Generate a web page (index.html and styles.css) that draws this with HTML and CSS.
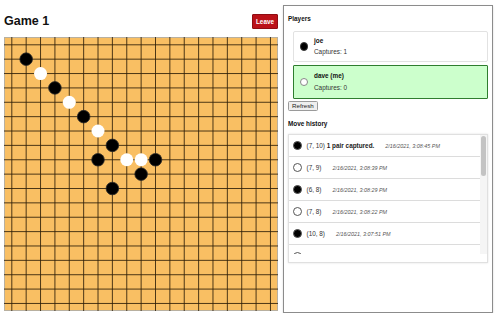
FILE: index.html
```html
<!DOCTYPE html>
<html>
<head>
<meta charset="utf-8">
<title>Game 1</title>
<link rel="stylesheet" href="styles.css">
</head>
<body>
<div class="app">
  <main class="game">
    <header class="game-header">
      <h1 class="title">Game 1</h1>
      <button class="leave">Leave</button>
    </header>
    <div class="board">
      <svg class="board-svg" width="274" height="274" viewBox="0 0 274 274">
        <rect x="0.5" y="0.5" width="273" height="273" fill="#f9bf63" stroke="#b8b0a0" stroke-width="1"/>
        <path class="grid" d="M7.8 0V274M22.17 0V274M36.54 0V274M50.91 0V274M65.28 0V274M79.65 0V274M94.02 0V274M108.39 0V274M122.76 0V274M137.13 0V274M151.5 0V274M165.87 0V274M180.24 0V274M194.61 0V274M208.98 0V274M223.35 0V274M237.72 0V274M252.09 0V274M266.46 0V274M0 7.8H274M0 22.17H274M0 36.54H274M0 50.91H274M0 65.28H274M0 79.65H274M0 94.02H274M0 108.39H274M0 122.76H274M0 137.13H274M0 151.5H274M0 165.87H274M0 180.24H274M0 194.61H274M0 208.98H274M0 223.35H274M0 237.72H274M0 252.09H274M0 266.46H274"/>
        <g class="black-stones">
          <circle cx="22.17" cy="22.17" r="6.3"/>
          <circle cx="50.91" cy="50.91" r="6.3"/>
          <circle cx="79.65" cy="79.65" r="6.3"/>
          <circle cx="108.39" cy="108.39" r="6.3"/>
          <circle cx="94.02" cy="122.76" r="6.3"/>
          <circle cx="151.5" cy="122.76" r="6.3"/>
          <circle cx="137.13" cy="137.13" r="6.3"/>
          <circle cx="108.39" cy="151.5" r="6.3"/>
        </g>
        <g class="white-stones">
          <circle cx="36.54" cy="36.54" r="6.5"/>
          <circle cx="65.28" cy="65.28" r="6.5"/>
          <circle cx="94.02" cy="94.02" r="6.5"/>
          <circle cx="122.76" cy="122.76" r="6.5"/>
          <circle cx="137.13" cy="122.76" r="6.5"/>
        </g>
      </svg>
    </div>
  </main>
  <aside class="panel">
    <h2 class="section-title">Players</h2>
    <ul class="players">
      <li class="player">
        <span class="pstone black"></span>
        <div class="pinfo">
          <div class="pname">joe</div>
          <div class="pcaps">Captures: 1</div>
        </div>
      </li>
      <li class="player me">
        <span class="pstone white"></span>
        <div class="pinfo">
          <div class="pname">dave (me)</div>
          <div class="pcaps">Captures: 0</div>
        </div>
      </li>
    </ul>
    <button class="refresh">Refresh</button>
    <h2 class="section-title history-title">Move history</h2>
    <div class="history-box">
      <ul class="history">
        <li class="move"><span class="hstone black"></span><span class="coord">(7, 10) <b>1 pair captured.</b></span><span class="date">2/16/2021, 3:08:45 PM</span></li>
        <li class="move"><span class="hstone white"></span><span class="coord">(7, 9)</span><span class="date">2/16/2021, 3:08:39 PM</span></li>
        <li class="move"><span class="hstone black"></span><span class="coord">(6, 8)</span><span class="date">2/16/2021, 3:08:29 PM</span></li>
        <li class="move"><span class="hstone white"></span><span class="coord">(7, 8)</span><span class="date">2/16/2021, 3:08:22 PM</span></li>
        <li class="move"><span class="hstone black"></span><span class="coord">(10, 8)</span><span class="date">2/16/2021, 3:07:51 PM</span></li>
        <li class="move partial"><span class="hstone white"></span></li>
      </ul>
      <div class="scrollbar"><div class="thumb"></div></div>
    </div>
  </aside>
</div>
</body>
</html>
```

FILE: styles.css
```css
* { box-sizing: border-box; }

html, body {
  margin: 0;
  padding: 0;
  background: #ffffff;
}

body {
  font-family: "Liberation Sans", Arial, sans-serif;
  font-size: 6.4px;
  color: #222;
}

.app {
  display: flex;
  align-items: flex-start;
  gap: 5px;
  padding: 5px 0 0 4px;
}

.game {
  width: 274px;
}

.game-header {
  display: flex;
  justify-content: space-between;
  align-items: center;
  height: 15px;
  margin-top: 9px;
  margin-bottom: 8px;
}

.title {
  margin: 0;
  font-size: 12.5px;
  font-weight: bold;
  color: #111;
  line-height: 15px;
}

.leave {
  width: 26px;
  height: 15px;
  padding: 0;
  margin: 0;
  border: 1px solid #8f0d12;
  border-radius: 1px;
  background: #bb1219;
  color: #ffffff;
  font-family: "Liberation Sans", Arial, sans-serif;
  font-weight: bold;
  font-size: 6.4px;
}

.board {
  width: 274px;
  height: 274px;
}

.board-svg {
  display: block;
}

.grid {
  stroke: #2e1f08;
  stroke-opacity: 0.85;
  stroke-width: 1;
  fill: none;
}

.black-stones circle {
  fill: #000000;
  stroke: #2a2a2a;
  stroke-width: 0.8;
}

.white-stones circle {
  fill: #ffffff;
}

.panel {
  width: 210px;
  height: 308px;
  border: 1px solid #8c8c8c;
  box-shadow: 0 1px 2px rgba(0, 0, 0, 0.15);
  padding: 0 4px 0 4px;
}

.section-title {
  margin: 8.5px 0 0 0;
  font-size: 6.4px;
  font-weight: bold;
  line-height: 7.5px;
  color: #111;
}

.players {
  list-style: none;
  margin: 8.5px 0 0 4.5px;
  padding: 0;
}

.player {
  display: flex;
  align-items: center;
  gap: 6px;
  height: 31.5px;
  padding: 0 6px;
  border: 1px solid #e2e2e2;
  border-radius: 2px;
  background: #ffffff;
}

.player.me {
  height: 33.5px;
  margin-top: 3px;
  background: #ccffcc;
  border: 1px solid #2f7d2f;
  border-radius: 1px;
}

.pinfo {
  display: flex;
  flex-direction: column;
  gap: 3.5px;
}

.pname {
  font-weight: bold;
  line-height: 8px;
  color: #111;
}

.pcaps {
  line-height: 8px;
  color: #333;
}

.pstone {
  width: 8.5px;
  height: 8.5px;
  border-radius: 50%;
  flex: none;
}

.pstone.black {
  background: #000000;
  border: 1px solid #3a3a3a;
}

.pstone.white {
  background: #ffffff;
  border: 1px solid #888;
}

.refresh {
  display: block;
  margin: 2.5px 0 0 0;
  height: 9.5px;
  padding: 0 3px;
  border: 1px solid #9a9a9a;
  border-radius: 1.5px;
  background: #efefef;
  color: #222;
  font-family: "Liberation Sans", Arial, sans-serif;
  font-size: 6.2px;
  line-height: 7px;
}

.history-title {
  margin-top: 9px;
}

.history-box {
  display: flex;
  align-items: flex-start;
  margin-top: 7px;
  width: 200px;
  height: 129px;
  border: 1px solid #e0e0e0;
  box-shadow: 0 0 2px rgba(0, 0, 0, 0.12);
}

.history {
  flex: 1;
  list-style: none;
  margin: 0;
  padding: 0;
  height: 119px;
  overflow: hidden;
}

.scrollbar {
  width: 7px;
  height: 119px;
  background: #f5f5f5;
  padding: 1px;
}

.thumb {
  width: 5px;
  height: 40px;
  border-radius: 3px;
  background: #c3c3c3;
}

.move {
  display: flex;
  align-items: center;
  height: 22px;
  padding-left: 4px;
  border-bottom: 1px solid #dcdcdc;
  color: #333;
  white-space: nowrap;
}

.move.partial {
  border-bottom: none;
}

.hstone {
  width: 9px;
  height: 9px;
  border-radius: 50%;
  flex: none;
  margin-right: 4.5px;
}

.hstone.black {
  background: #000000;
  border: 1px solid #555;
}

.hstone.white {
  background: #ffffff;
  border: 1px solid #555;
}

.coord b {
  color: #222;
}

.date {
  margin-left: 11px;
  font-size: 5.4px;
  font-style: italic;
  color: #555;
}
```
